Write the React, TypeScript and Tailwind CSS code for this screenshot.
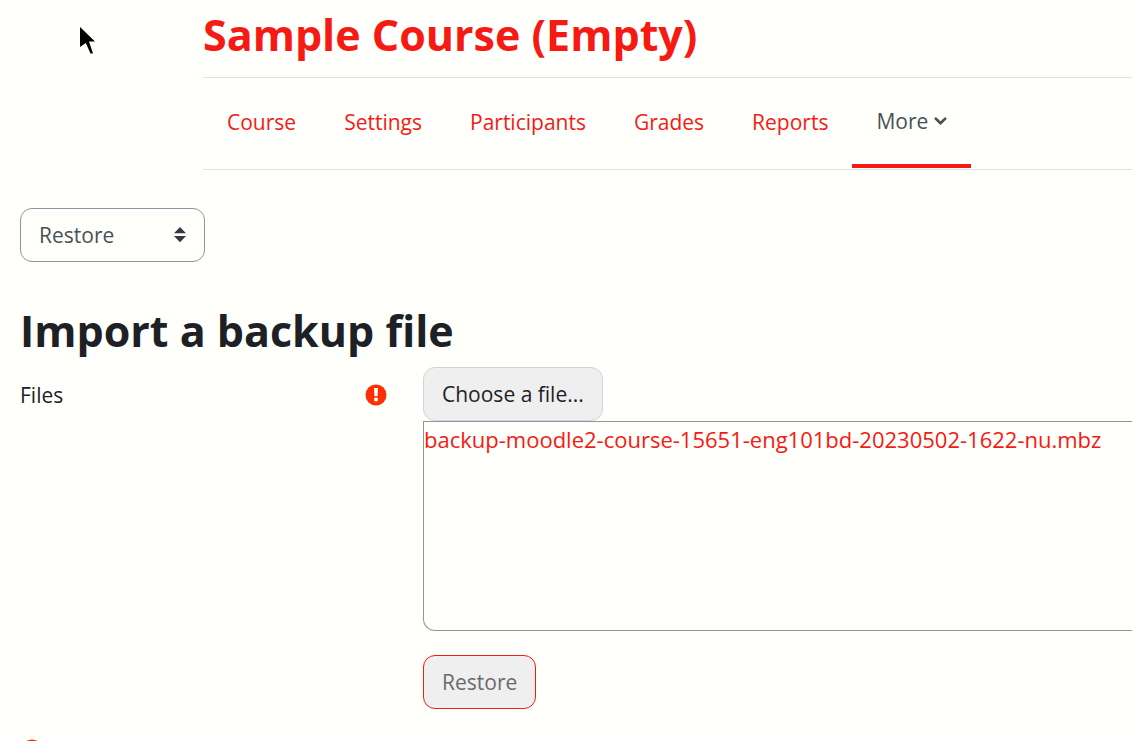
import React from "react";

interface NavItem {
  label: string;
  href: string;
}

const navItems: NavItem[] = [
  { label: "Course", href: "#course" },
  { label: "Settings", href: "#settings" },
  { label: "Participants", href: "#participants" },
  { label: "Grades", href: "#grades" },
  { label: "Reports", href: "#reports" },
];

function RequiredIcon() {
  return (
    <svg className="block size-[22px] shrink-0" viewBox="0 0 22 22" role="img" aria-label="Required">
      <circle cx="11" cy="11" r="10.5" fill="#ff2f00" />
      <path d="M9 4h4l-.5 8.3h-3z" fill="#fff" />
      <rect x="9.2" y="13.8" width="3.6" height="3.4" rx=".4" fill="#fff" />
    </svg>
  );
}

function Pointer() {
  return (
    <svg
      className="absolute left-20 top-[27px] h-7 w-4 pointer-events-none"
      viewBox="0 0 16 28"
      aria-hidden="true"
    >
      <path d="M0 0l15 14.5H9L13 26.5h-2.5L5.8 16 0 20z" fill="#000" />
    </svg>
  );
}

export default function App() {
  return (
    <div className="relative min-h-screen overflow-hidden bg-[#fffffb] font-['Open_Sans','Noto_Sans',sans-serif] text-[21px] leading-8 text-[#1d2125]">
      <Pointer />

      {/* Course header and secondary navigation */}
      <header className="ml-[203px]">
        <h1 className="pt-2 pb-[15px] text-[43px] leading-[54px] font-bold text-[#f51a14]">
          Sample Course (Empty)
        </h1>
        <nav className="flex border-y border-[#dee2e6] whitespace-nowrap">
          {navItems.map((item) => (
            <a key={item.label} href={item.href} className="flex h-[91px] items-center px-6 pb-1 text-[#f51a14]">
              {item.label}
            </a>
          ))}
          <button
            type="button"
            className="mb-px flex h-[90px] items-center gap-[6px] border-b-4 border-[#f51a14] px-6 text-[#495057]"
          >
            More
            <svg className="h-3 w-[13px]" viewBox="0 0 13 12" fill="none" aria-hidden="true">
              <path
                d="M1.8 3.6l4.7 4.6 4.7-4.6"
                stroke="#495057"
                strokeWidth="2.7"
                strokeLinecap="round"
                strokeLinejoin="round"
              />
            </svg>
          </button>
        </nav>
      </header>

      <main className="pl-5">
        <div className="relative mt-[38px] w-[185px]">
          <select
            aria-label="Course reuse"
            defaultValue="restore"
            className="block h-[54px] w-full appearance-none rounded-xl border border-[#8f959e] bg-transparent pl-[18px] text-[#495057]"
          >
            <option value="restore">Restore</option>
            <option value="import">Import</option>
            <option value="backup">Backup</option>
          </select>
          <svg
            className="absolute right-[19px] top-[19px] h-4 w-3 pointer-events-none"
            viewBox="0 0 12 16"
            aria-hidden="true"
          >
            <path d="M6 0l6 6.3H0zM6 15.3l6-6.3H0z" fill="#343a40" />
          </svg>
        </div>

        <form>
          <h2 className="mt-[42px] text-[43px] leading-[54px] font-bold">Import a backup file</h2>

          <div className="mt-[9px] flex">
            <div className="flex w-[403px] shrink-0 justify-between pt-3 pr-9">
              <label htmlFor="choose-file">Files</label>
              <span className="pt-[5px]">
                <RequiredIcon />
              </span>
            </div>
            <div className="min-w-0 grow">
              <button
                id="choose-file"
                type="button"
                className="block h-[54px] rounded-xl border border-[#ced4da] bg-[#efefef] px-[18px]"
              >
                Choose a file...
              </button>
              <div className="h-[210px] rounded-bl-xl border border-r-0 border-[#8f959e] pt-px">
                <a href="#backup" className="text-[22px] text-[#f51a14]">
                  backup-moodle2-course-15651-eng101bd-20230502-1622-nu.mbz
                </a>
              </div>
              <button
                type="submit"
                className="mt-6 block h-[54px] rounded-xl border border-[#f51a14] bg-[#efefef] px-[18px] text-[#6a6a6a]"
              >
                Restore
              </button>
            </div>
          </div>

          <div className="mt-[30px] pl-px">
            <RequiredIcon />
          </div>
        </form>
      </main>
    </div>
  );
}
